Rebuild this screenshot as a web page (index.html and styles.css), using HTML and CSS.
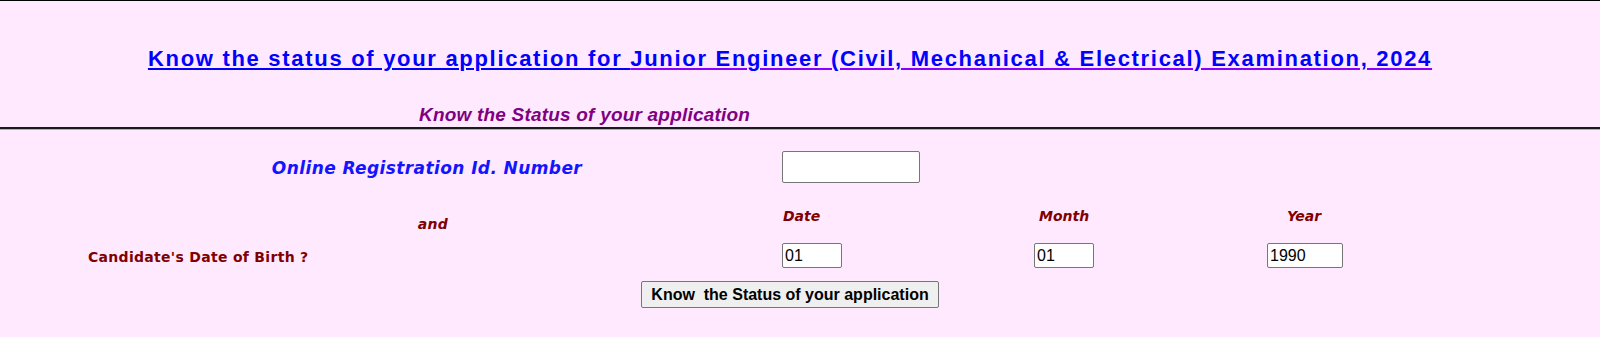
FILE: index.html
```html
<!DOCTYPE html>
<html>
<head>
  <title>Know the status of your application</title>
  <link rel="stylesheet" href="styles.css">
</head>
<body>
  <div class="title-bar">
    <a class="title" href="#"><span class="part-one">Know the status of your application for </span><span class="part-two">Junior Engineer (Civil, Mechanical &amp; Electrical) Examination, 2024</span></a>
  </div>

  <div class="sub-head">Know the Status of your application</div>
  <hr class="rule">

  <form class="status-form">
    <div class="grid">
      <div class="reg-label">Online Registration Id. Number</div>
      <div class="cell"><input type="text" class="reg-input"></div>
      <div></div>
      <div></div>

      <div class="and-label">and</div>
      <div class="head head-date">Date</div>
      <div class="head head-month">Month</div>
      <div class="head head-year">Year</div>

      <div class="dob-label">Candidate's Date of Birth ?</div>
      <div class="cell"><input type="text" class="small-input" value="01"></div>
      <div class="cell"><input type="text" class="small-input" value="01"></div>
      <div class="cell"><input type="text" class="year-input" value="1990"></div>
    </div>

    <div class="actions">
      <input type="submit" class="btn" value="Know&nbsp; the Status of your application">
    </div>
  </form>
</body>
</html>
```

FILE: styles.css
```css
body {
  margin: 0;
  background-color: #ffe9ff;
  font-family: "Liberation Sans", Arial, sans-serif;
}

.title-bar {
  border-top: 1px solid #000;
  padding-top: 45px;
  padding-right: 20px;
  text-align: center;
}

.title {
  font-size: 22px;
  font-weight: bold;
  letter-spacing: 1.7px;
  color: #0000ff;
  text-decoration: none;
}

.part-one {
  text-decoration: underline;
  text-decoration-color: #0000ff;
}

.part-two {
  text-decoration: underline;
  text-decoration-color: #8a00ff;
}

.sub-head {
  margin-top: 32px;
  padding-left: 419px;
  font-size: 19px;
  font-weight: bold;
  font-style: italic;
  letter-spacing: 0.2px;
  color: #800080;
}

.rule {
  margin: 1px 0 0 0;
  border: none;
  border-top: 2px solid #1a1a1a;
  border-bottom: 1px solid #b8a8b8;
  height: 0;
}

.grid {
  display: grid;
  grid-template-columns: 694px 252px 233px 200px;
  grid-template-rows: 32px 60px 25px;
  margin-left: 88px;
  margin-top: 21px;
}

.reg-label {
  align-self: center;
  padding-right: 16px;
  padding-top: 2px;
  text-align: center;
  font-family: "DejaVu Sans", Verdana, sans-serif;
  font-size: 17px;
  font-weight: bold;
  font-style: italic;
  letter-spacing: 0.4px;
  color: #1414ff;
}

.cell {
  display: flex;
  align-items: center;
}

.reg-input {
  width: 138px;
  height: 32px;
  box-sizing: border-box;
  border: 1px solid #767676;
  border-radius: 2px;
  background: #fff;
}

.and-label {
  padding-top: 33px;
  padding-right: 4px;
  text-align: center;
  font-family: "DejaVu Sans", Verdana, sans-serif;
  font-size: 14px;
  font-weight: bold;
  font-style: italic;
  letter-spacing: 0.3px;
  color: #800000;
}

.head {
  padding-top: 25px;
  font-family: "DejaVu Sans", Verdana, sans-serif;
  font-size: 14px;
  font-weight: bold;
  font-style: italic;
  color: #800000;
}

.head-date {
  padding-left: 1px;
}

.head-month {
  padding-left: 5px;
}

.head-year {
  padding-left: 20px;
}

.dob-label {
  padding-top: 6px;
  font-family: "DejaVu Sans", Verdana, sans-serif;
  font-size: 14px;
  font-weight: bold;
  letter-spacing: 0.3px;
  color: #800000;
}

.small-input,
.year-input {
  height: 25px;
  box-sizing: border-box;
  border: 1px solid #767676;
  border-radius: 2px;
  padding: 1px 2px;
  font-family: "Liberation Sans", Arial, sans-serif;
  font-size: 16px;
  color: #000;
  background: #fff;
}

.small-input {
  width: 60px;
}

.year-input {
  width: 76px;
}

.actions {
  padding-right: 20px;
  margin-top: 13px;
  text-align: center;
}

.btn {
  width: 298px;
  height: 27px;
  padding: 0;
  font-family: "Liberation Sans", Arial, sans-serif;
  font-size: 16px;
  font-weight: bold;
  color: #000;
  background-color: #efefef;
  border: 1px solid #767676;
  border-radius: 2px;
}
```
